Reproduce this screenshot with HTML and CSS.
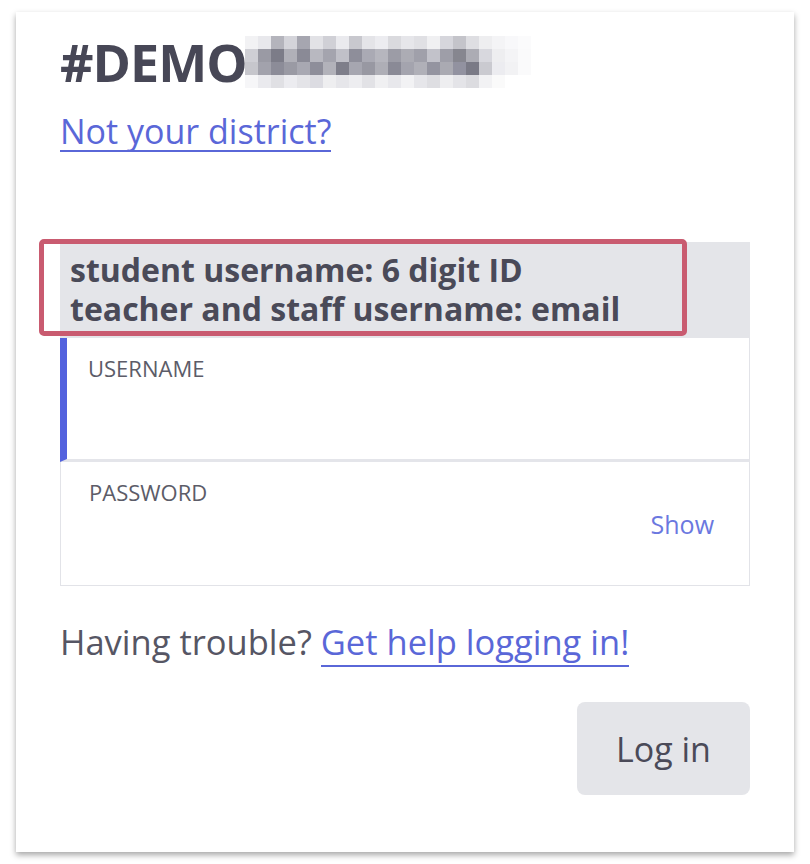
FILE: index.html
```html
<!DOCTYPE html>
<html lang="en">

<head>
    <meta charset="UTF-8">
    <meta name="viewport" content="width=device-width, initial-scale=1.0">
    <title>Log in</title>
    <link rel="stylesheet" href="styles.css">
</head>

<body>

    <div class="card">
        <!-- District name -->
        <h1 class="district">
            <span>#DEMO</span>
            <svg class="blur" width="300" height="52" viewBox="0 0 300 52">
                <rect x="0" y="0" width="300" height="52" fill="#ffffff"/>
                <g>
                    <rect x="0" y="0" width="13" height="13" fill="#f2f2f4"/>
                    <rect x="13" y="0" width="13" height="13" fill="#e8e8ec"/>
                    <rect x="26" y="0" width="13" height="13" fill="#b4b4bc"/>
                    <rect x="39" y="0" width="13" height="13" fill="#d4d4da"/>
                    <rect x="52" y="0" width="13" height="13" fill="#a6a6b0"/>
                    <rect x="65" y="0" width="13" height="13" fill="#e2e2e6"/>
                    <rect x="78" y="0" width="13" height="13" fill="#d0d0d6"/>
                    <rect x="91" y="0" width="13" height="13" fill="#eaeaee"/>
                    <rect x="104" y="0" width="13" height="13" fill="#c8c8ce"/>
                    <rect x="117" y="0" width="13" height="13" fill="#e4e4e8"/>
                    <rect x="130" y="0" width="13" height="13" fill="#ececf0"/>
                    <rect x="143" y="0" width="13" height="13" fill="#dadade"/>
                    <rect x="156" y="0" width="13" height="13" fill="#e6e6ea"/>
                    <rect x="169" y="0" width="13" height="13" fill="#e0e0e4"/>
                    <rect x="182" y="0" width="13" height="13" fill="#f0f0f2"/>
                    <rect x="195" y="0" width="13" height="13" fill="#d6d6dc"/>
                    <rect x="208" y="0" width="13" height="13" fill="#c4c4ca"/>
                    <rect x="221" y="0" width="13" height="13" fill="#dedee2"/>
                    <rect x="234" y="0" width="13" height="13" fill="#eeeef0"/>
                    <rect x="247" y="0" width="13" height="13" fill="#f4f4f6"/>
                    <rect x="260" y="0" width="13" height="13" fill="#f8f8fa"/>
                    <rect x="273" y="0" width="13" height="13" fill="#fbfbfc"/>

                    <rect x="0" y="13" width="13" height="13" fill="#cfcfd5"/>
                    <rect x="13" y="13" width="13" height="13" fill="#9a9aa4"/>
                    <rect x="26" y="13" width="13" height="13" fill="#7c7c88"/>
                    <rect x="39" y="13" width="13" height="13" fill="#b0b0b8"/>
                    <rect x="52" y="13" width="13" height="13" fill="#8a8a96"/>
                    <rect x="65" y="13" width="13" height="13" fill="#b8b8c0"/>
                    <rect x="78" y="13" width="13" height="13" fill="#a4a4ae"/>
                    <rect x="91" y="13" width="13" height="13" fill="#c0c0c8"/>
                    <rect x="104" y="13" width="13" height="13" fill="#8e8e9a"/>
                    <rect x="117" y="13" width="13" height="13" fill="#aaaab4"/>
                    <rect x="130" y="13" width="13" height="13" fill="#b6b6be"/>
                    <rect x="143" y="13" width="13" height="13" fill="#9c9ca6"/>
                    <rect x="156" y="13" width="13" height="13" fill="#acacb4"/>
                    <rect x="169" y="13" width="13" height="13" fill="#a0a0aa"/>
                    <rect x="182" y="13" width="13" height="13" fill="#c2c2ca"/>
                    <rect x="195" y="13" width="13" height="13" fill="#9e9ea8"/>
                    <rect x="208" y="13" width="13" height="13" fill="#86868f"/>
                    <rect x="221" y="13" width="13" height="13" fill="#acacb4"/>
                    <rect x="234" y="13" width="13" height="13" fill="#d8d8de"/>
                    <rect x="247" y="13" width="13" height="13" fill="#eeeef0"/>
                    <rect x="260" y="13" width="13" height="13" fill="#f4f4f6"/>
                    <rect x="273" y="13" width="13" height="13" fill="#fafafb"/>

                    <rect x="0" y="26" width="13" height="13" fill="#c6c6cc"/>
                    <rect x="13" y="26" width="13" height="13" fill="#a2a2ac"/>
                    <rect x="26" y="26" width="13" height="13" fill="#8c8c98"/>
                    <rect x="39" y="26" width="13" height="13" fill="#9a9aa4"/>
                    <rect x="52" y="26" width="13" height="13" fill="#a8a8b2"/>
                    <rect x="65" y="26" width="13" height="13" fill="#8e8e9a"/>
                    <rect x="78" y="26" width="13" height="13" fill="#b2b2ba"/>
                    <rect x="91" y="26" width="13" height="13" fill="#7e7e8a"/>
                    <rect x="104" y="26" width="13" height="13" fill="#a6a6b0"/>
                    <rect x="117" y="26" width="13" height="13" fill="#9898a2"/>
                    <rect x="130" y="26" width="13" height="13" fill="#aeaeb6"/>
                    <rect x="143" y="26" width="13" height="13" fill="#8a8a96"/>
                    <rect x="156" y="26" width="13" height="13" fill="#a4a4ae"/>
                    <rect x="169" y="26" width="13" height="13" fill="#b0b0b8"/>
                    <rect x="182" y="26" width="13" height="13" fill="#9494a0"/>
                    <rect x="195" y="26" width="13" height="13" fill="#aaaab2"/>
                    <rect x="208" y="26" width="13" height="13" fill="#9292a0"/>
                    <rect x="221" y="26" width="13" height="13" fill="#7a7a86"/>
                    <rect x="234" y="26" width="13" height="13" fill="#cacad0"/>
                    <rect x="247" y="26" width="13" height="13" fill="#ececf0"/>
                    <rect x="260" y="26" width="13" height="13" fill="#f2f2f4"/>
                    <rect x="273" y="26" width="13" height="13" fill="#fafafb"/>

                    <rect x="0" y="39" width="13" height="13" fill="#f6f6f8"/>
                    <rect x="13" y="39" width="13" height="13" fill="#eaeaee"/>
                    <rect x="26" y="39" width="13" height="13" fill="#e0e0e4"/>
                    <rect x="39" y="39" width="13" height="13" fill="#ececf0"/>
                    <rect x="52" y="39" width="13" height="13" fill="#e4e4e8"/>
                    <rect x="65" y="39" width="13" height="13" fill="#dcdce2"/>
                    <rect x="78" y="39" width="13" height="13" fill="#eeeef0"/>
                    <rect x="91" y="39" width="13" height="13" fill="#e6e6ea"/>
                    <rect x="104" y="39" width="13" height="13" fill="#ededf0"/>
                    <rect x="117" y="39" width="13" height="13" fill="#e2e2e6"/>
                    <rect x="130" y="39" width="13" height="13" fill="#f0f0f2"/>
                    <rect x="143" y="39" width="13" height="13" fill="#e8e8ec"/>
                    <rect x="156" y="39" width="13" height="13" fill="#f2f2f4"/>
                    <rect x="169" y="39" width="13" height="13" fill="#e6e6ea"/>
                    <rect x="182" y="39" width="13" height="13" fill="#dedee2"/>
                    <rect x="195" y="39" width="13" height="13" fill="#eeeef0"/>
                    <rect x="208" y="39" width="13" height="13" fill="#e4e4e8"/>
                    <rect x="221" y="39" width="13" height="13" fill="#dcdce0"/>
                    <rect x="234" y="39" width="13" height="13" fill="#f2f2f4"/>
                    <rect x="247" y="39" width="13" height="13" fill="#fafafa"/>
                </g>
            </svg>
        </h1>

        <a href="#" class="switch-link">Not your district?</a>

        <!-- Форма входа -->
        <form class="login-form">
            <div class="hint">
                <p>student username: 6 digit ID</p>
                <p>teacher and staff username: email</p>
                <div class="hint-mark"></div>
            </div>

            <label class="field field-active">
                <span class="field-label">USERNAME</span>
                <input type="text">
            </label>

            <label class="field">
                <span class="field-label">PASSWORD</span>
                <input type="password">
                <a href="#" class="show-link">Show</a>
            </label>
        </form>

        <p class="trouble">Having trouble? <a href="#">Get help logging in!</a></p>

        <div class="actions">
            <button class="login-button">Log in</button>
        </div>
    </div>

</body>

</html>
```

FILE: styles.css
```css
* {
    margin: 0;
    padding: 0;
    box-sizing: border-box;
    font-family: 'Open Sans', sans-serif;
}

body {
    background-color: #ffffff;
    color: #4b4b59;
    padding: 12px 16px;
}

a {
    color: #5a67d8;
    text-decoration: none;
}

/* Карточка */
.card {
    background-color: #fff;
    height: 840px;
    padding: 20px 44px 0;
    box-shadow: 0 3px 6px rgba(0, 0, 0, 0.35);
}

.district {
    display: flex;
    align-items: center;
    font-size: 52px;
    font-weight: 700;
    color: #474756;
    line-height: 60px;
    letter-spacing: -1px;
}

.blur {
    display: block;
    margin-left: -2px;
}

.switch-link {
    display: inline-block;
    margin-top: 20px;
    font-size: 34px;
    line-height: 38px;
    border-bottom: 2px solid #5a67d8;
}

/* Форма */
.login-form {
    margin-top: 90px;
}

.hint {
    position: relative;
    background-color: #e4e5e9;
    padding: 8px 10px 10px;
    font-size: 32px;
    font-weight: 700;
    line-height: 39px;
    color: #4a4a58;
}

.hint-mark {
    position: absolute;
    top: -3px;
    left: -21px;
    width: 648px;
    height: 97px;
    border: 5px solid #c95b70;
    border-radius: 5px;
}

.field {
    display: block;
    position: relative;
    height: 124px;
    padding: 15px 28px;
    border: 1px solid #e2e3e8;
    border-top: none;
    background-color: #fff;
}

.field-active {
    border-left: 7px solid #5362de;
    border-bottom: 3px solid #e4e5ea;
    padding-left: 21px;
}

.field-label {
    display: block;
    font-size: 22px;
    line-height: 30px;
    color: #5c5c68;
}

.field input {
    display: block;
    width: 100%;
    border: none;
    outline: none;
    background: transparent;
    font-size: 22px;
    margin-top: 10px;
}

.show-link {
    position: absolute;
    right: 35px;
    top: 45px;
    font-size: 25px;
    line-height: 34px;
    color: #6b78e0;
}

.trouble {
    margin-top: 35px;
    font-size: 34.5px;
    line-height: 42px;
    color: #565664;
}

.trouble a {
    border-bottom: 2px solid #5a67d8;
}

.actions {
    display: flex;
    justify-content: flex-end;
    margin-top: 39px;
}

.login-button {
    width: 173px;
    height: 93px;
    background-color: #e4e5e9;
    border: none;
    border-radius: 8px;
    font-size: 34px;
    color: #4a4a58;
    cursor: pointer;
}
```
